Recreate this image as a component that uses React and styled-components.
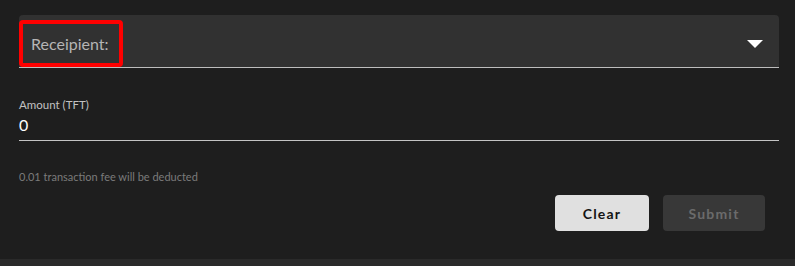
import React from "react";
import styled, { createGlobalStyle } from "styled-components";

const Global = createGlobalStyle`
  html, body { margin: 0; padding: 0; background: #2a2a2a; }
  body { font-family: Lato, "Open Sans", sans-serif; }
  * { box-sizing: border-box; }
`;

const Card = styled.div`
  width: 795px;
  height: 259px;
  background: #1e1e1e;
  box-shadow: 0 2px 2px rgba(0, 0, 0, 0.35);
  padding: 15px 16px 0 19px;
  display: flex;
  flex-direction: column;
`;

const SelectField = styled.div`
  position: relative;
  height: 53px;
  background: #313131;
  border-radius: 4px 4px 0 0;
  border-bottom: 1px solid #bdbdbd;
  display: flex;
  align-items: center;
  justify-content: space-between;
  padding: 5px 16px 0 12px;
`;

const SelectLabel = styled.span`
  font-size: 16px;
  color: #b5b5b5;
`;

const Highlight = styled.div`
  position: absolute;
  left: 0;
  top: 5px;
  width: 104px;
  height: 47px;
  border: 4px solid #ff0000;
  border-radius: 4px;
`;

const Field = styled.div`
  margin-top: 30px;
  display: flex;
  flex-direction: column;
  border-bottom: 1px solid #c4c4c4;
`;

const FieldLabel = styled.label`
  font-size: 11.5px;
  line-height: 14px;
  color: #c2c2c2;
`;

const FieldValue = styled.div`
  font-size: 16px;
  line-height: 20px;
  color: #ffffff;
  padding: 3px 0 5px;
`;

const Hint = styled.div`
  margin-top: 29px;
  font-size: 11px;
  line-height: 14px;
  color: #7b7b7b;
`;

const Actions = styled.div`
  margin-top: 11px;
  display: flex;
  justify-content: flex-end;
  gap: 14px;
  padding-right: 14px;
`;

const Button = styled.button`
  height: 36px;
  min-width: ${(p) => p.$w}px;
  border: none;
  border-radius: 4px;
  font-family: Lato, sans-serif;
  font-weight: 700;
  font-size: 14px;
  letter-spacing: 1.2px;
  background: ${(p) => (p.$disabled ? "#383838" : "#e0e0e0")};
  color: ${(p) => (p.$disabled ? "#6b6b6b" : "#141414")};
  cursor: pointer;
`;

const Caret = () => (
  <svg width="16" height="10" viewBox="0 0 16 10">
    <path d="M0 1 L16 1 L8 9 Z" fill="#ffffff" />
  </svg>
);

export default function App() {
  return (
    <>
      <Global />
      <Card>
        <SelectField>
          <SelectLabel>Receipient:</SelectLabel>
          <Caret />
          <Highlight />
        </SelectField>
        <Field>
          <FieldLabel>Amount (TFT)</FieldLabel>
          <FieldValue>0</FieldValue>
        </Field>
        <Hint>0.01 transaction fee will be deducted</Hint>
        <Actions>
          <Button $w={94}>Clear</Button>
          <Button $w={102} $disabled>Submit</Button>
        </Actions>
      </Card>
    </>
  );
}
